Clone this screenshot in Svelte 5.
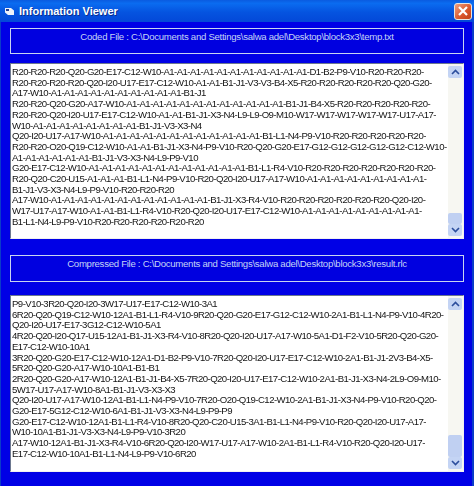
<script>
  const title = "Information Viewer";

  const panes = [
    {
      kind: "coded",
      label: "Coded File : C:\\Documents and Settings\\salwa adel\\Desktop\\block3x3\\temp.txt",
      lines: [
        "R20-R20-R20-Q20-G20-E17-C12-W10-A1-A1-A1-A1-A1-A1-A1-A1-A1-A1-A1-D1-B2-P9-V10-R20-R20-R20-",
        "R20-R20-R20-R20-Q20-I20-U17-E17-C12-W10-A1-A1-B1-J1-V3-V3-B4-X5-R20-R20-R20-R20-R20-Q20-G20-",
        "A17-W10-A1-A1-A1-A1-A1-A1-A1-A1-A1-A1-B1-J1",
        "R20-R20-Q20-G20-A17-W10-A1-A1-A1-A1-A1-A1-A1-A1-A1-A1-A1-A1-B1-J1-B4-X5-R20-R20-R20-R20-R20-",
        "R20-R20-Q20-I20-U17-E17-C12-W10-A1-A1-B1-J1-X3-N4-L9-L9-O9-M10-W17-W17-W17-W17-W17-U17-A17-",
        "W10-A1-A1-A1-A1-A1-A1-A1-A1-B1-J1-V3-X3-N4",
        "Q20-I20-U17-A17-W10-A1-A1-A1-A1-A1-A1-A1-A1-A1-A1-A1-A1-B1-L1-N4-P9-V10-R20-R20-R20-R20-R20-",
        "R20-R20-O20-Q19-C12-W10-A1-A1-B1-J1-X3-N4-P9-V10-R20-Q20-G20-E17-G12-G12-G12-G12-G12-C12-W10-",
        "A1-A1-A1-A1-A1-A1-B1-J1-V3-X3-N4-L9-P9-V10",
        "G20-E17-C12-W10-A1-A1-A1-A1-A1-A1-A1-A1-A1-A1-A1-A1-B1-L1-R4-V10-R20-R20-R20-R20-R20-R20-R20-",
        "R20-Q20-C20-U15-A1-A1-A1-B1-L1-N4-P9-V10-R20-Q20-I20-U17-A17-W10-A1-A1-A1-A1-A1-A1-A1-A1-A1-",
        "B1-J1-V3-X3-N4-L9-P9-V10-R20-R20-R20",
        "A17-W10-A1-A1-A1-A1-A1-A1-A1-A1-A1-A1-A1-A1-B1-J1-X3-R4-V10-R20-R20-R20-R20-R20-R20-Q20-I20-",
        "W17-U17-A17-W10-A1-A1-B1-L1-R4-V10-R20-Q20-I20-U17-E17-C12-W10-A1-A1-A1-A1-A1-A1-A1-A1-A1-",
        "B1-L1-N4-L9-P9-V10-R20-R20-R20-R20-R20-R20",
      ],
    },
    {
      kind: "compressed",
      label: "Compressed File : C:\\Documents and Settings\\salwa adel\\Desktop\\block3x3\\result.rlc",
      lines: [
        "P9-V10-3R20-Q20-I20-3W17-U17-E17-C12-W10-3A1",
        "6R20-Q20-Q19-C12-W10-12A1-B1-L1-R4-V10-9R20-Q20-G20-E17-G12-C12-W10-2A1-B1-L1-N4-P9-V10-4R20-",
        "Q20-I20-U17-E17-3G12-C12-W10-5A1",
        "4R20-Q20-I20-Q17-U15-12A1-B1-J1-X3-R4-V10-8R20-Q20-I20-U17-A17-W10-5A1-D1-F2-V10-5R20-Q20-G20-",
        "E17-C12-W10-10A1",
        "3R20-Q20-G20-E17-C12-W10-12A1-D1-B2-P9-V10-7R20-Q20-I20-U17-E17-C12-W10-2A1-B1-J1-2V3-B4-X5-",
        "5R20-Q20-G20-A17-W10-10A1-B1-B1",
        "2R20-Q20-G20-A17-W10-12A1-B1-J1-B4-X5-7R20-Q20-I20-U17-E17-C12-W10-2A1-B1-J1-X3-N4-2L9-O9-M10-",
        "5W17-U17-A17-W10-8A1-B1-J1-V3-X3-X3",
        "Q20-I20-U17-A17-W10-12A1-B1-L1-N4-P9-V10-7R20-O20-Q19-C12-W10-2A1-B1-J1-X3-N4-P9-V10-R20-Q20-",
        "G20-E17-5G12-C12-W10-6A1-B1-J1-V3-X3-N4-L9-P9-P9",
        "G20-E17-C12-W10-12A1-B1-L1-R4-V10-8R20-Q20-C20-U15-3A1-B1-L1-N4-P9-V10-R20-Q20-I20-U17-A17-",
        "W10-10A1-B1-J1-V3-X3-N4-L9-P9-V10-3R20",
        "A17-W10-12A1-B1-J1-X3-R4-V10-6R20-Q20-I20-W17-U17-A17-W10-2A1-B1-L1-R4-V10-R20-Q20-I20-U17-",
        "E17-C12-W10-10A1-B1-L1-N4-L9-P9-V10-6R20",
      ],
    },
  ];
</script>

<div class="window">
  <header class="titlebar">
    <svg class="appicon" viewBox="0 0 9 7" width="9" height="7">
      <path d="M0 0h6l3 2.5V7H3L0 4.5z" fill="#eef2fa" />
      <path d="M1 1h3v2H1z" fill="#27408f" />
    </svg>
    <span class="title">{title}</span>
    <button class="close" aria-label="Close">
      <svg viewBox="0 0 12 12" width="12" height="12">
        <path d="M2 2l8 8M10 2l-8 8" stroke="#fff" stroke-width="2.2" />
      </svg>
    </button>
  </header>

  <main class="body">
    {#each panes as pane}
      <section class="pane {pane.kind}">
        <div class="label">{pane.label}</div>
        <div class="box">
          <pre class="text">{pane.lines.join("\n")}</pre>
          <div class="scrollbar">
            <span class="arrow">
              <svg viewBox="0 0 9 6" width="9" height="6"><path d="M1 5l3.5-3.5L8 5" fill="none" stroke="#2b4d9c" stroke-width="1.6" /></svg>
            </span>
            <span class="track"><span class="thumb"></span></span>
            <span class="arrow">
              <svg viewBox="0 0 9 6" width="9" height="6"><path d="M1 1l3.5 3.5L8 1" fill="none" stroke="#2b4d9c" stroke-width="1.6" /></svg>
            </span>
          </div>
        </div>
      </section>
    {/each}
  </main>
</div>

<style>
  :global(body) {
    margin: 0;
    background: #0000e6;
  }

  .window {
    width: 474px;
    height: 486px;
    display: flex;
    flex-direction: column;
    overflow: hidden;
    font-family: "Liberation Sans", sans-serif;
  }

  .titlebar {
    height: 22px;
    flex: none;
    display: flex;
    align-items: center;
    gap: 5px;
    padding: 0 2px 0 5px;
    background: linear-gradient(#0a5be0 0%, #0a6cf0 15%, #0554e0 55%, #0348d8 100%);
  }

  .title {
    flex: 1;
    color: #fff;
    font: bold 11px "Liberation Sans", sans-serif;
    text-shadow: 1px 1px 0 #0a2f8e;
  }

  .close {
    width: 18px;
    height: 17px;
    padding: 0;
    display: grid;
    place-items: center;
    border: 1px solid #e8e4e0;
    border-radius: 3px;
    background: linear-gradient(135deg, #f0a080, #d9542a 60%, #c04018);
  }

  .body {
    flex: 1;
    display: flex;
    flex-direction: column;
    padding: 6px 9px 0;
    gap: 16px;
    background: #0000e6;
    border-left: 1px solid #0a3cc8;
    border-right: 2px solid #0a3cc8;
  }

  .pane {
    display: flex;
    flex-direction: column;
  }

  .coded {
    gap: 9px;
  }

  .compressed {
    gap: 13px;
  }

  .label {
    box-sizing: border-box;
    border: 1px solid #c8d4f0;
    color: #c4d4f6;
    font-size: 9.6px;
    letter-spacing: -0.28px;
    line-height: 11px;
    text-align: center;
    padding-top: 2px;
    background: #0000e0;
    margin-right: -1px;
  }

  .coded .label {
    height: 26px;
  }

  .compressed .label {
    height: 27px;
  }

  .box {
    display: flex;
    background: #fff;
    border: 1px solid #6c7890;
    border-right-color: #f0f0f0;
    border-bottom-color: #f0f0f0;
    box-sizing: border-box;
    margin-right: -1px;
  }

  .coded .box {
    height: 176px;
  }

  .compressed .box {
    height: 177px;
  }

  .text {
    flex: 1;
    min-width: 0;
    margin: 0;
    padding: 3px 0 0 1px;
    overflow: hidden;
    color: #141414;
    font-family: "Liberation Sans", sans-serif;
    font-size: 9.6px;
    letter-spacing: -0.55px;
    line-height: 10.7px;
    filter: blur(0.3px);
  }

  .scrollbar {
    width: 15px;
    flex: none;
    box-sizing: border-box;
    padding: 2px 1px 2px 0;
    display: flex;
    flex-direction: column;
    background: #f7f7f2;
  }

  .arrow {
    height: 12px;
    flex: none;
    display: grid;
    place-items: center;
    background: #c4d4f4;
    border-radius: 2px;
  }

  .track {
    flex: 1;
    display: flex;
    flex-direction: column;
    justify-content: flex-end;
  }

  .thumb {
    display: block;
    background: #c0d0f2;
    border-radius: 2px;
  }

  .coded .thumb {
    height: 11px;
  }

  .compressed .thumb {
    height: 22px;
  }
</style>
